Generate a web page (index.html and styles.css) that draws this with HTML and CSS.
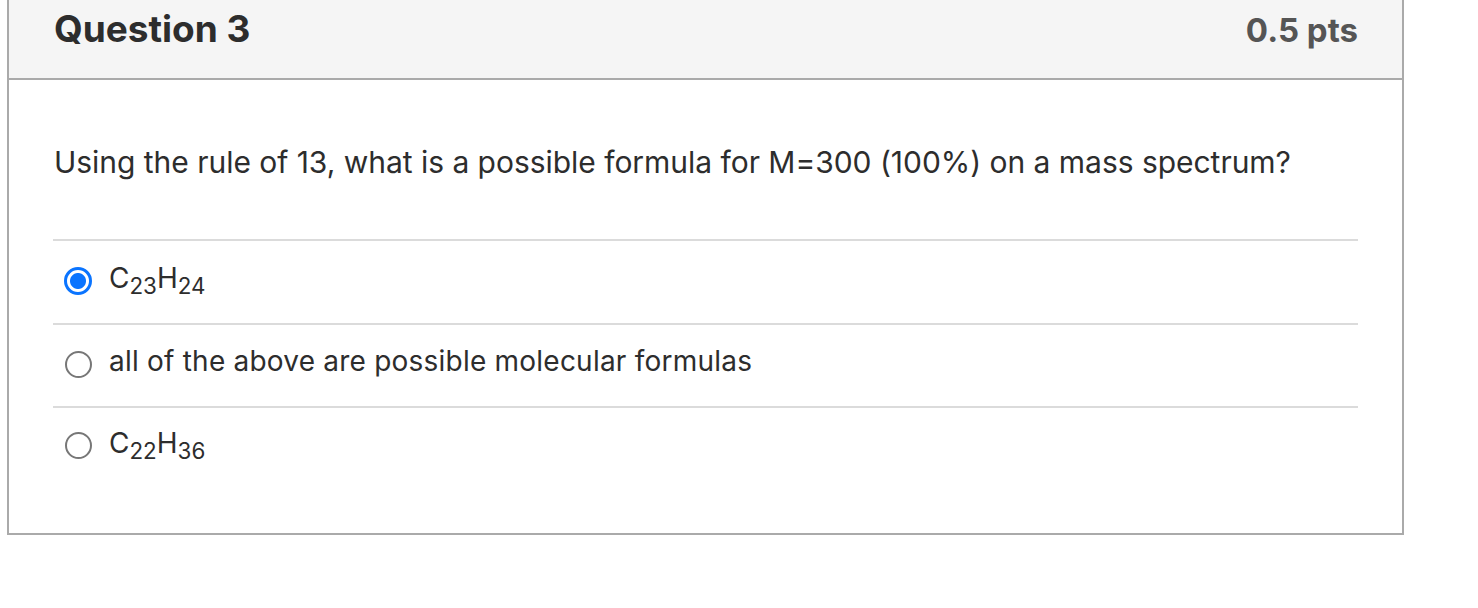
FILE: index.html
```html
<!DOCTYPE html>
<html lang="en">
<head>
<meta charset="utf-8">
<title>Question 3</title>
<link rel="stylesheet" href="styles.css">
</head>
<body>
<div class="question">
  <div class="question-header">
    <h2 class="question-title">Question 3</h2>
    <span class="question-points">0.5 pts</span>
  </div>
  <div class="question-body">
    <p class="question-text">Using the rule of 13, what is a possible formula for M=300 (100%) on a mass spectrum?</p>
    <ul class="answers">
      <li class="answer">
        <span class="radio radio-checked"></span>
        <span class="answer-label">C<sub>23</sub>H<sub>24</sub></span>
      </li>
      <li class="answer">
        <span class="radio"></span>
        <span class="answer-label answer-text">all of the above are possible molecular formulas</span>
      </li>
      <li class="answer">
        <span class="radio"></span>
        <span class="answer-label">C<sub>22</sub>H<sub>36</sub></span>
      </li>
    </ul>
  </div>
</div>
</body>
</html>
```

FILE: styles.css
```css
html, body {
  margin: 0;
  padding: 0;
  background: #fff;
}
body {
  font-family: Inter, "Noto Sans", sans-serif;
  color: #2d2d2d;
}
.question {
  margin-left: 7px;
  width: 1393px;
  border: 2px solid #aaaaaa;
  border-top: none;
}
.question-header {
  height: 80px;
  box-sizing: border-box;
  background: #f5f5f5;
  border-bottom: 2px solid #aaaaaa;
  display: flex;
  justify-content: space-between;
  align-items: baseline;
  padding: 7px 44px 0 45px;
}
.question-title {
  margin: 0;
  font-size: 37px;
  font-weight: 700;
  color: #2d2d2d;
  line-height: 44px;
}
.question-points {
  font-size: 33px;
  font-weight: 700;
  color: #555555;
  line-height: 44px;
}
.question-body {
  padding: 0 44px;
  height: 453px;
  box-sizing: border-box;
}
.question-text {
  margin: 0;
  padding: 62px 0 0 1px;
  font-size: 30px;
  line-height: 40px;
  height: 97px;
  letter-spacing: -0.03px;
}
.answers {
  list-style: none;
  margin: 0;
  padding: 0;
}
.answer {
  display: flex;
  align-items: center;
  border-top: 2px solid #dbdbdb;
  height: 84px;
  box-sizing: border-box;
  padding: 0 0 3px 12px;
  font-size: 28px;
}
.answer:nth-child(2) {
  height: 83px;
}
.answer:nth-child(3) {
  height: 80px;
}
.answer-label {
  margin-bottom: 6px;
}
.answer-text {
  letter-spacing: 0.22px;
}
.radio {
  width: 27px;
  height: 27px;
  border: 2px solid #777777;
  border-radius: 50%;
  box-sizing: border-box;
  flex: none;
  margin-right: 17px;
}
.radio-checked {
  width: 28px;
  height: 28px;
  border: 3px solid #0a74ff;
  background: radial-gradient(circle, #0a74ff 0 7.5px, #ffffff 8.5px);
  margin-left: -1px;
  margin-right: 17px;
}
.answer-label sub {
  font-size: 0.8em;
  vertical-align: -0.28em;
  line-height: 0;
}
```
